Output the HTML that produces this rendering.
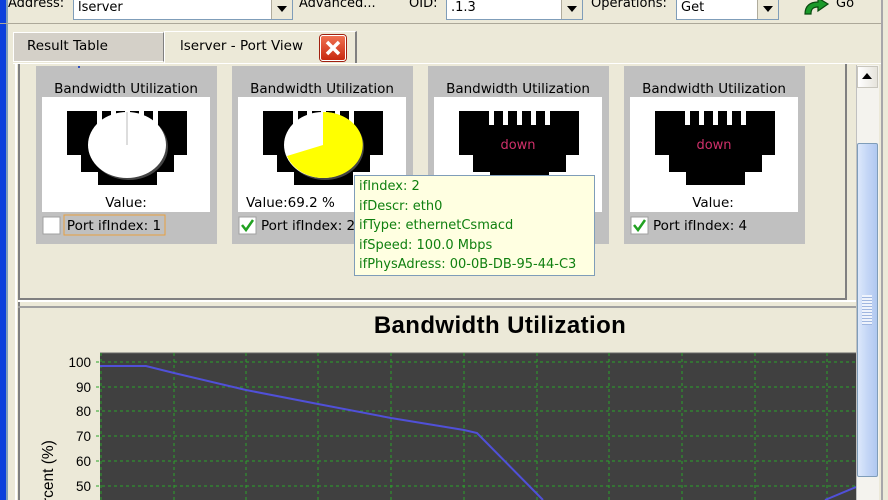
<!DOCTYPE html>
<html><head><meta charset="utf-8"><style>
*{margin:0;padding:0;box-sizing:border-box}
body{width:888px;height:500px;overflow:hidden;background:#ece9d8;font-family:Tahoma,"DejaVu Sans","Liberation Sans",sans-serif;font-size:13px;color:#000;position:relative}
.a{position:absolute;white-space:nowrap}
.combo{position:absolute;background:#fff;border:1px solid #7f9db9;height:22px;top:-2px}
.combo .btn{position:absolute;right:0;top:0;bottom:0;width:21px;background:#ece9d8;border-left:1px solid #b0ac9c}
.combo .btn:after{content:"";position:absolute;left:5px;top:7px;border:5px solid transparent;border-top:6px solid #000}
.combo span{position:absolute;left:4px;top:1px}
</style></head><body>
<div class="a" style="left:0;top:0;width:6px;height:500px;background:#0b3fdc"></div>
<div class="a" style="left:6px;top:0;width:2px;height:500px;background:#7f9db9"></div>
<div class="a" style="left:881px;top:0;width:2px;height:500px;background:#a7a6aa"></div>
<div class="a" style="left:883px;top:0;width:5px;height:500px;background:#ece9d8"></div>
<!-- toolbar -->
<div class="a" style="left:8px;top:-4px">Address:</div>
<div class="combo" style="left:73px;width:220px"><span>lserver</span><div class="btn"></div></div>
<div class="a" style="left:299px;top:-4px">Advanced...</div>
<div class="a" style="left:409px;top:-4px">OID:</div>
<div class="combo" style="left:446px;width:137px"><span>.1.3</span><div class="btn"></div></div>
<div class="a" style="left:591px;top:-4px">Operations:</div>
<div class="combo" style="left:676px;width:103px"><span>Get</span><div class="btn"></div></div>
<svg class="a" style="left:802px;top:-2px" width="30" height="18"><path d="M3,16 C3,8 8,4 16,4 L16,0 L26,6 L16,13 L16,9 C11,9 9,11 9,16 Z" fill="#1a9a2a" stroke="#0a4a10" stroke-width="1.2"/></svg>
<div class="a" style="left:836px;top:-4px">Go</div>
<div class="a" style="left:0;top:23px;width:881px;height:1px;background:#aca899"></div>
<!-- tabs -->
<div class="a" style="left:13px;top:32px;width:151px;height:30px;background:#d4d0c8;border:1px solid #fff;border-right-color:#808080"></div>
<div class="a" style="left:27px;top:38px;font-size:13.5px">Result Table</div>
<div class="a" style="left:164px;top:31px;width:193px;height:33px;background:#ece9d8;border:1px solid #fff;border-right:2px solid #808080;border-bottom:none"></div>
<div class="a" style="left:180px;top:38px;font-size:13.5px">lserver - Port View</div>
<div class="a" style="left:320px;top:35px;width:26px;height:26px;background:linear-gradient(#f07050,#c82810);border:1px solid #fff;border-radius:3px;box-shadow:0 0 0 1px #a02010"></div>
<svg class="a" style="left:320px;top:35px" width="26" height="26"><path d="M7,7 L19,19 M19,7 L7,19" stroke="#fff" stroke-width="3.5"/></svg>
<div class="a" style="left:13px;top:63px;width:868px;height:1px;background:#fff"></div>
<!-- content frame -->
<div class="a" style="left:15px;top:64px;width:2px;height:436px;background:#fff"></div>
<div class="a" style="left:18px;top:64px;width:2px;height:436px;background:#808080"></div>
<div class="a" style="left:20px;top:64px;width:827px;height:236px;border-right:2px solid #808080;border-bottom:2px solid #808080"></div>
<div class="a" style="left:18px;top:300px;width:839px;height:2px;background:#fff"></div>
<div class="a" style="left:18px;top:306px;width:839px;height:2px;background:#a0a0a0"></div>
<!-- scrollbar -->
<div class="a" style="left:856px;top:65px;width:23px;height:435px;background:#f4f3ee;border-left:1px solid #c0c0c0"></div>
<div class="a" style="left:857px;top:66px;width:21px;height:22px;background:linear-gradient(90deg,#fff,#e6e4dc);border:1px solid #c8c6bd"></div>
<div class="a" style="left:862px;top:73px;border:5px solid transparent;border-bottom:6px solid #000;border-top:none"></div>
<div class="a" style="left:857px;top:143px;width:21px;height:334px;background:linear-gradient(90deg,#dce8fb,#c4d6f6 50%,#b0c8f0);border:1px solid #7f9db9;border-radius:2px"></div>
<div class="a" style="left:862px;top:295px;width:10px;height:30px;background:repeating-linear-gradient(#eef3fc 0 2px,#9fb6e0 2px 3px)"></div>
<!-- cards -->
<svg class="a" style="left:0;top:0" width="856" height="300">
<defs>
<g id="conn"><path d="M0,0 H120 V44 H107 V61 H90 V74 H31 V61 H14 V44 H0 Z" fill="#000"/>
<rect x="30" y="0" width="5" height="14" fill="#fff"/><rect x="44" y="0" width="5" height="14" fill="#fff"/><rect x="58" y="0" width="5" height="14" fill="#fff"/><rect x="72" y="0" width="5" height="14" fill="#fff"/><rect x="86" y="0" width="5" height="14" fill="#fff"/></g>
</defs>
<g font-family="Tahoma,DejaVu Sans,sans-serif" font-size="13.5" text-anchor="middle">
<rect x="36" y="66" width="181" height="178" fill="#c0c0c0"/><rect x="42" y="97" width="168" height="115" fill="#fff"/>
<text x="126" y="93">Bandwidth Utilization</text>
<use href="#conn" x="67" y="111"/>
<ellipse cx="129" cy="147" rx="39" ry="33" fill="#888" opacity=".5"/>
<ellipse cx="127" cy="145" rx="39" ry="33" fill="#fff"/><line x1="127" y1="112" x2="127" y2="145" stroke="#bbb"/>
<text x="126" y="207">Value:</text>
<rect x="43" y="217" width="17" height="17" fill="#fff" stroke="#a0a0a0"/><rect x="64" y="215" width="101" height="20" fill="none" stroke="#e8a040"/>
<text x="114" y="230">Port ifIndex: 1</text>

<rect x="232" y="66" width="181" height="178" fill="#c0c0c0"/><rect x="238" y="97" width="168" height="115" fill="#fff"/>
<text x="322" y="93">Bandwidth Utilization</text>
<use href="#conn" x="263" y="111"/>
<ellipse cx="325" cy="147" rx="39" ry="33" fill="#888" opacity=".5"/>
<ellipse cx="323" cy="145" rx="39" ry="33" fill="#fff"/>
<path d="M323,145 L323,112 A39,33 0 1,1 287,156 Z" fill="#ffff00"/>
<text x="246" y="207" text-anchor="start">Value:69.2 %</text>
<rect x="239" y="217" width="17" height="17" fill="#fff" stroke="#a0a0a0"/><path d="M242,225 L246,230 L253,220" stroke="#21a121" stroke-width="2.5" fill="none"/>
<text x="261" y="230" text-anchor="start">Port ifIndex: 2</text>

<rect x="428" y="66" width="181" height="178" fill="#c0c0c0"/><rect x="434" y="97" width="168" height="115" fill="#fff"/>
<text x="518" y="93">Bandwidth Utilization</text>
<use href="#conn" x="459" y="111"/>
<text x="518" y="149" fill="#d0306a" font-size="13">down</text>

<rect x="624" y="66" width="181" height="178" fill="#c0c0c0"/><rect x="630" y="97" width="168" height="115" fill="#fff"/>
<text x="714" y="93">Bandwidth Utilization</text>
<use href="#conn" x="655" y="111"/>
<text x="714" y="149" fill="#d0306a" font-size="13">down</text>
<text x="713" y="207">Value:</text>
<rect x="631" y="217" width="17" height="17" fill="#fff" stroke="#a0a0a0"/><path d="M634,225 L638,230 L645,220" stroke="#21a121" stroke-width="2.5" fill="none"/>
<text x="653" y="230" text-anchor="start">Port ifIndex: 4</text>
</g>
<rect x="78" y="66" width="2" height="2" fill="#3050c0"/>
</svg>
<!-- tooltip -->
<div class="a" style="left:354px;top:175px;width:241px;height:101px;background:#ffffe1;border:1px solid #7f9db9;color:#108010;font-size:13px;line-height:19.6px;padding:1px 0 0 4px">ifIndex: 2<br>ifDescr: eth0<br>ifType: ethernetCsmacd<br>ifSpeed: 100.0 Mbps<br>ifPhysAdress: 00-0B-DB-95-44-C3</div>
<!-- chart -->
<div class="a" style="left:0;top:312px;width:1000px;text-align:center;font-family:'Liberation Sans',Arial,sans-serif;font-weight:bold;font-size:24px;letter-spacing:0.4px">Bandwidth Utilization</div>
<svg class="a" style="left:0;top:0" width="856" height="500">
<rect x="100" y="353" width="756" height="147" fill="#404040"/>
<line x1="100" y1="353" x2="856" y2="353" stroke="#666"/>
<g stroke="#2aa52a" stroke-width="1" stroke-dasharray="3,3">
<line x1="96" y1="362" x2="856" y2="362"/><line x1="96" y1="387" x2="856" y2="387"/><line x1="96" y1="411" x2="856" y2="411"/><line x1="96" y1="436" x2="856" y2="436"/><line x1="96" y1="461" x2="856" y2="461"/><line x1="96" y1="486" x2="856" y2="486"/>
<line x1="101" y1="353" x2="101" y2="500"/><line x1="174" y1="353" x2="174" y2="500"/><line x1="246" y1="353" x2="246" y2="500"/><line x1="318" y1="353" x2="318" y2="500"/><line x1="391" y1="353" x2="391" y2="500"/><line x1="464" y1="353" x2="464" y2="500"/><line x1="537" y1="353" x2="537" y2="500"/><line x1="609" y1="353" x2="609" y2="500"/><line x1="682" y1="353" x2="682" y2="500"/><line x1="755" y1="353" x2="755" y2="500"/><line x1="827" y1="353" x2="827" y2="500"/>
</g>
<polyline points="100,366 146,366 174,373 246,390 318,404 391,418 464,430 477,433 543,500" fill="none" stroke="#5050d8" stroke-width="2"/>
<polyline points="825,500 856,487" fill="none" stroke="#5050d8" stroke-width="2"/>
<g font-family="Liberation Sans,Arial,sans-serif" font-size="13.5" text-anchor="end">
<text x="91" y="367">100</text><text x="91" y="392">90</text><text x="91" y="416">80</text><text x="91" y="441">70</text><text x="91" y="466">60</text><text x="91" y="491">50</text>
<text transform="translate(53,522) rotate(-90)" text-anchor="start" font-size="15.5" x="0" y="0">Percent (%)</text>
</g>
</svg>
</body></html>
